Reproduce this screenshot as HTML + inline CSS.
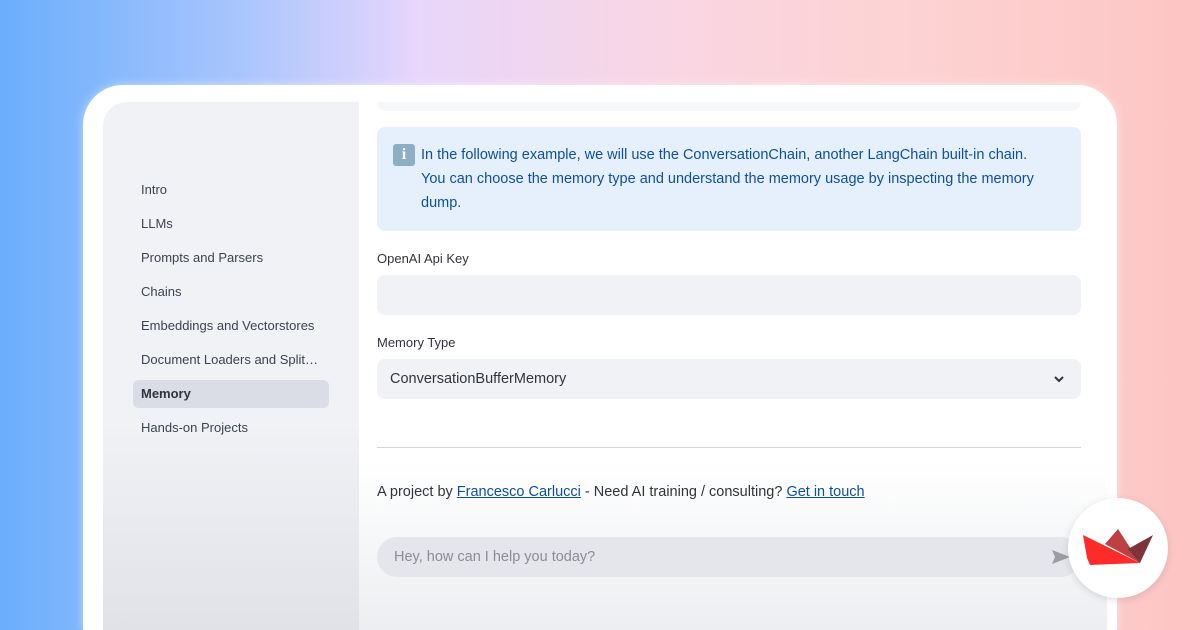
<!DOCTYPE html>
<html style="width:1200px;height:630px;overflow:hidden"><head><style>
*{margin:0;padding:0;box-sizing:border-box}
body{width:1200px;height:630px;overflow:hidden;position:relative;font-family:"Liberation Sans",sans-serif;
background:linear-gradient(90deg,#6aaefc 0%,#a9c5fd 20%,#e8d6fb 35%,#f9d6e4 55%,#fdd3d3 75%,#fdc5c4 100%)}
.frame{position:absolute;left:83px;top:85px;width:1034px;height:545px;background:#fff;border-radius:40px 40px 0 0;box-shadow:0 0 10px rgba(255,255,255,.5)}
.inner{position:absolute;left:103px;top:102px;width:1004px;height:528px;border-radius:24px 0 0 0;overflow:hidden;background:linear-gradient(180deg,#fff 0%,#fff 68%,#eceef1 100%)}
.side{position:absolute;left:0;top:0;width:256px;height:528px;background:linear-gradient(180deg,#f0f2f6 0%,#f0f2f6 60%,#e0e2e7 100%)}
.nav{position:absolute;left:30px;width:196px;height:28px;line-height:28px;padding-left:8px;font-size:13px;color:#3d4252;border-radius:6px}
.nav.act{background:#dadde6;font-weight:bold;color:#31333f}
.main{position:absolute;left:274px;width:704px}
.lbl{font-size:13px;color:#31333f}
.inp{background:#f0f2f6;border-radius:8px;height:40px}
</style></head><body>
<div class="frame"></div>
<div class="inner">
 <div class="side">
  <div class="nav" style="top:74px">Intro</div>
  <div class="nav" style="top:108px">LLMs</div>
  <div class="nav" style="top:142px">Prompts and Parsers</div>
  <div class="nav" style="top:176px">Chains</div>
  <div class="nav" style="top:210px">Embeddings and Vectorstores</div>
  <div class="nav" style="top:244px">Document Loaders and Split…</div>
  <div class="nav act" style="top:278px">Memory</div>
  <div class="nav" style="top:312px">Hands-on Projects</div>
 </div>
 <div class="main" style="top:-10px;height:19px;background:#f7f8fa;border-radius:10px"></div>
 <div class="main" style="top:25px;height:104px;background:#e6f0fc;border-radius:8px;padding:16px 40px 0 44px;color:#0e4f9c;font-size:14.5px;line-height:24px">
  <div style="position:absolute;left:16px;top:17px;width:22px;height:22px;background:#8eaec4;border-radius:3px;color:#fff;font-weight:bold;text-align:center;line-height:22px;font-size:16px;font-family:'Liberation Serif',serif">i</div>
  In the following example, we will use the ConversationChain, another LangChain built-in chain. You can choose the memory type and understand the memory usage by inspecting the memory dump.
 </div>
 <div class="main lbl" style="top:149px">OpenAI Api Key</div>
 <div class="main inp" style="top:173px"></div>
 <div class="main lbl" style="top:233px">Memory Type</div>
 <div class="main inp" style="top:257px;padding:0 13px;line-height:40px;font-size:14.5px;color:#31333f">ConversationBufferMemory
  <svg style="position:absolute;right:16px;top:15px" width="12" height="10" viewBox="0 0 12 10"><path d="M2 3l4 4 4-4" stroke="#31333f" stroke-width="2" fill="none"/></svg></div>
 <div class="main" style="top:345px;height:1px;background:#d3d5da"></div>
 <div class="main" style="top:382px;font-size:14.5px;color:#31333f">A project by <u style="color:#0e4f9c">Francesco Carlucci</u> - Need AI training / consulting? <u style="color:#0e4f9c">Get in touch</u></div>
 <div class="main" style="top:435px;height:40px;background:#e4e6eb;border-radius:20px;padding-left:17px;line-height:40px;font-size:14.5px;color:#8b8d96">Hey, how can I help you today?
  <svg style="position:absolute;right:10px;top:12px" width="20" height="16" viewBox="0 0 20 16"><path d="M1 1l18 7-18 7 3-7z" fill="#9a9ca8"/></svg></div>
</div>
<div style="position:absolute;left:1068px;top:498px;width:100px;height:100px;border-radius:50%;background:#fff;box-shadow:0 2px 8px rgba(0,0,0,.12)"></div>
<svg style="position:absolute;left:1083px;top:528px" width="72" height="42" viewBox="0 0 72 42">
 <path d="M0 7L57 35 7 37 4 30z" fill="#ff2b2b"/>
 <path d="M22 16L35 1 57 35z" fill="#bd4043"/>
 <path d="M45 21L70 7 57 35z" fill="#7d353b"/>
</svg>
</body></html>
